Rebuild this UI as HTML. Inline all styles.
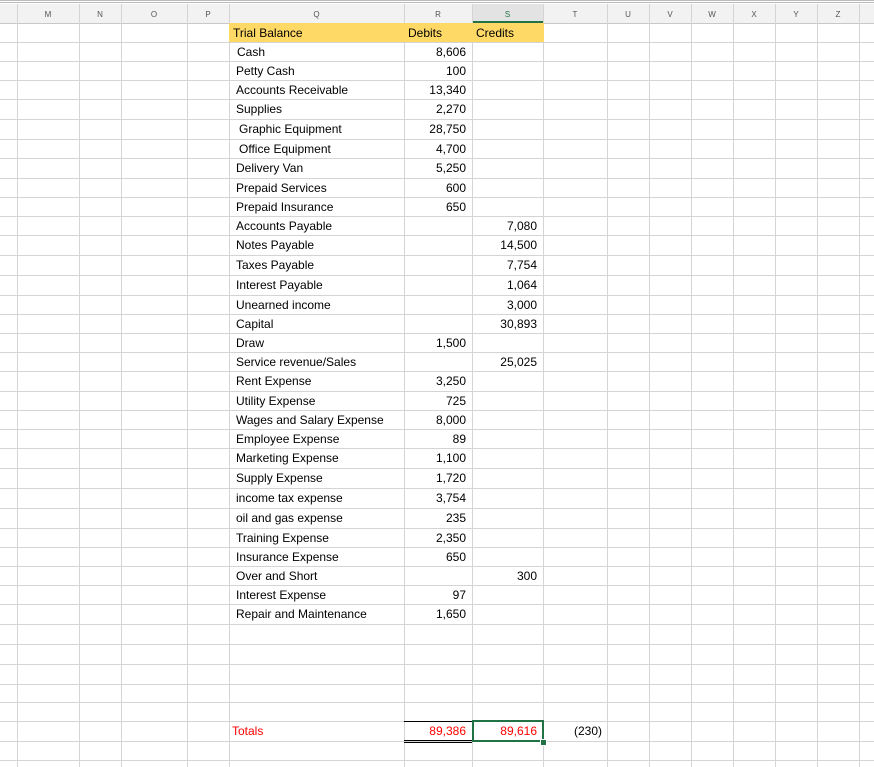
<!DOCTYPE html>
<html><head><meta charset="utf-8"><style>
body{margin:0;width:874px;height:767px;overflow:hidden;background:#fff;font-family:"Liberation Sans",sans-serif;position:relative}
.v{position:absolute;top:4px;width:1px;height:763px;background:#d4d4d4}
.h{position:absolute;left:0;width:874px;height:1px;background:#d4d4d4}
.hdr{position:absolute;left:0;top:4px;width:874px;height:19px;background:#f2f2f2;border-bottom:1px solid #c8c8c8}
.cl{position:absolute;top:5px;height:19px;line-height:19px;font-size:8px;color:#555;text-align:center}
.r{position:absolute;left:0;width:874px;font-size:12px;color:#000}
.r span{position:absolute;white-space:nowrap}
.q{left:233px}.d{right:408px}.c{right:337px}
</style></head><body>
<div style="position:absolute;left:0;top:0;width:874px;height:1px;background:#bbb"></div>
<div style="position:absolute;left:0;top:2px;width:874px;height:1px;background:#bbb"></div>
<div class="hdr"></div>

<div class="v" style="left:17px"></div><div class="v" style="left:79px"></div><div class="v" style="left:121px"></div><div class="v" style="left:187px"></div><div class="v" style="left:229px"></div><div class="v" style="left:404px"></div><div class="v" style="left:472px"></div><div class="v" style="left:543px"></div><div class="v" style="left:607px"></div><div class="v" style="left:649px"></div><div class="v" style="left:691px"></div><div class="v" style="left:733px"></div><div class="v" style="left:775px"></div><div class="v" style="left:817px"></div><div class="v" style="left:859px"></div>

<div style="position:absolute;left:473px;top:4px;width:70px;height:19px;background:#e3e3e3;border-bottom:2px solid #217346;box-sizing:border-box"></div>
<div style="position:absolute;left:229px;top:23px;width:315px;height:20px;background:#ffd966"></div>

<div class="cl" style="left:17px;width:62px">M</div><div class="cl" style="left:79px;width:42px">N</div><div class="cl" style="left:121px;width:66px">O</div><div class="cl" style="left:187px;width:42px">P</div><div class="cl" style="left:229px;width:175px">Q</div><div class="cl" style="left:404px;width:68px">R</div><div class="cl" style="left:472px;width:71px;color:#217346">S</div><div class="cl" style="left:543px;width:64px">T</div><div class="cl" style="left:607px;width:42px">U</div><div class="cl" style="left:649px;width:42px">V</div><div class="cl" style="left:691px;width:42px">W</div><div class="cl" style="left:733px;width:42px">X</div><div class="cl" style="left:775px;width:42px">Y</div><div class="cl" style="left:817px;width:42px">Z</div>

<div class="h" style="top:42px"></div><div class="h" style="top:61px"></div><div class="h" style="top:80px"></div><div class="h" style="top:99px"></div><div class="h" style="top:119px"></div><div class="h" style="top:139px"></div><div class="h" style="top:158px"></div><div class="h" style="top:178px"></div><div class="h" style="top:197px"></div><div class="h" style="top:216px"></div><div class="h" style="top:235px"></div><div class="h" style="top:255px"></div><div class="h" style="top:275px"></div><div class="h" style="top:295px"></div><div class="h" style="top:314px"></div><div class="h" style="top:333px"></div><div class="h" style="top:352px"></div><div class="h" style="top:371px"></div><div class="h" style="top:391px"></div><div class="h" style="top:410px"></div><div class="h" style="top:429px"></div><div class="h" style="top:448px"></div><div class="h" style="top:468px"></div><div class="h" style="top:488px"></div><div class="h" style="top:508px"></div><div class="h" style="top:528px"></div><div class="h" style="top:547px"></div><div class="h" style="top:566px"></div><div class="h" style="top:585px"></div><div class="h" style="top:604px"></div><div class="h" style="top:624px"></div><div class="h" style="top:644px"></div><div class="h" style="top:664px"></div><div class="h" style="top:684px"></div><div class="h" style="top:702px"></div><div class="h" style="top:721px"></div><div class="h" style="top:741px"></div><div class="h" style="top:760px"></div>

<div class="r" style="top:26px"><span class="q">Trial Balance</span><span style="left:408px">Debits</span><span style="left:476px">Credits</span></div>
<div class="r" style="top:45px"><span class="q" style="left:237px">Cash</span><span class="d">8,606</span></div>
<div class="r" style="top:64px"><span class="q" style="left:236px">Petty Cash</span><span class="d">100</span></div>
<div class="r" style="top:83px"><span class="q" style="left:236px">Accounts Receivable</span><span class="d">13,340</span></div>
<div class="r" style="top:102px"><span class="q" style="left:236px">Supplies</span><span class="d">2,270</span></div>
<div class="r" style="top:122px"><span class="q" style="left:239px">Graphic  Equipment</span><span class="d">28,750</span></div>
<div class="r" style="top:142px"><span class="q" style="left:239px">Office  Equipment</span><span class="d">4,700</span></div>
<div class="r" style="top:161px"><span class="q" style="left:236px">Delivery Van</span><span class="d">5,250</span></div>
<div class="r" style="top:181px"><span class="q" style="left:236px">Prepaid Services</span><span class="d">600</span></div>
<div class="r" style="top:200px"><span class="q" style="left:236px">Prepaid Insurance</span><span class="d">650</span></div>
<div class="r" style="top:219px"><span class="q" style="left:236px">Accounts Payable</span><span class="c">7,080</span></div>
<div class="r" style="top:238px"><span class="q" style="left:236px">Notes Payable</span><span class="c">14,500</span></div>
<div class="r" style="top:258px"><span class="q" style="left:236px">Taxes Payable</span><span class="c">7,754</span></div>
<div class="r" style="top:278px"><span class="q" style="left:236px">Interest Payable</span><span class="c">1,064</span></div>
<div class="r" style="top:298px"><span class="q" style="left:236px">Unearned income</span><span class="c">3,000</span></div>
<div class="r" style="top:317px"><span class="q" style="left:236px">Capital</span><span class="c">30,893</span></div>
<div class="r" style="top:336px"><span class="q" style="left:236px">Draw</span><span class="d">1,500</span></div>
<div class="r" style="top:355px"><span class="q" style="left:236px">Service revenue/Sales</span><span class="c">25,025</span></div>
<div class="r" style="top:374px"><span class="q" style="left:236px">Rent Expense</span><span class="d">3,250</span></div>
<div class="r" style="top:394px"><span class="q" style="left:236px">Utility Expense</span><span class="d">725</span></div>
<div class="r" style="top:413px"><span class="q" style="left:236px">Wages and Salary Expense</span><span class="d">8,000</span></div>
<div class="r" style="top:432px"><span class="q" style="left:236px">Employee Expense</span><span class="d">89</span></div>
<div class="r" style="top:451px"><span class="q" style="left:236px">Marketing Expense</span><span class="d">1,100</span></div>
<div class="r" style="top:471px"><span class="q" style="left:236px">Supply Expense</span><span class="d">1,720</span></div>
<div class="r" style="top:491px"><span class="q" style="left:236px">income tax expense</span><span class="d">3,754</span></div>
<div class="r" style="top:511px"><span class="q" style="left:236px">oil and gas expense</span><span class="d">235</span></div>
<div class="r" style="top:531px"><span class="q" style="left:236px">Training Expense</span><span class="d">2,350</span></div>
<div class="r" style="top:550px"><span class="q" style="left:236px">Insurance Expense</span><span class="d">650</span></div>
<div class="r" style="top:569px"><span class="q" style="left:236px">Over and Short</span><span class="c">300</span></div>
<div class="r" style="top:588px"><span class="q" style="left:236px">Interest Expense</span><span class="d">97</span></div>
<div class="r" style="top:607px"><span class="q" style="left:236px">Repair and Maintenance</span><span class="d">1,650</span></div>

<div style="position:absolute;left:404px;top:721px;width:68px;height:1px;background:#000"></div>
<div style="position:absolute;left:404px;top:740px;width:68px;height:1px;background:#000"></div>
<div style="position:absolute;left:404px;top:742px;width:68px;height:1px;background:#000"></div>
<div style="position:absolute;left:472px;top:720px;width:72px;height:22px;border:2px solid #217346;box-sizing:border-box"></div>
<div style="position:absolute;left:540px;top:739px;width:5px;height:5px;background:#217346;border:1px solid #fff"></div>
<div class="r" style="top:724px;color:#f00"><span style="left:232px">Totals</span><span class="d">89,386</span><span class="c">89,616</span><span style="right:272px;color:#000">(230)</span></div>
</body></html>
